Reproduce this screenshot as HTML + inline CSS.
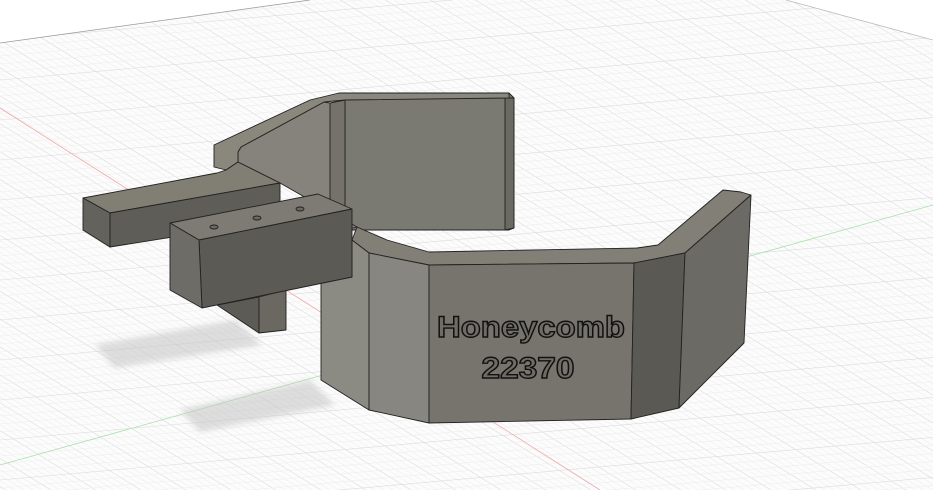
<!DOCTYPE html><html><head><meta charset="utf-8"><style>
html,body{margin:0;padding:0;background:#fff;width:933px;height:490px;overflow:hidden}
svg{display:block;overflow:hidden}
</style></head><body>
<svg id="s" width="933" height="490" viewBox="0 0 933 490" xmlns="http://www.w3.org/2000/svg">
<defs><filter id="b"><feGaussianBlur stdDeviation="3"/></filter></defs>
<polygon points="0,43 310,0 786,0 933,40 933,490 0,490" fill="#fcfcfc"/>
<g id="grid" stroke-width="0.6"></g>
<polygon points="0,0 310,0 0,43" fill="#fff"/>
<polygon points="786,0 933,0 933,40" fill="#fff"/>
<line x1="0" y1="108" x2="600" y2="490" stroke="#f0a8a8" stroke-width="0.8"/>
<line x1="0" y1="465" x2="933" y2="205" stroke="#a8e0a8" stroke-width="0.8"/>
<line x1="0" y1="43" x2="310" y2="0" stroke="#999" stroke-width="0.8"/>
<line x1="786" y1="0" x2="933" y2="40" stroke="#bbb" stroke-width="0.8"/>
<!-- shadows -->
<polygon points="95,345 235,320 262,345 115,368" fill="#c4c4c4" opacity="0.55" filter="url(#b)"/>
<polygon points="180,410 310,380 335,405 200,432" fill="#c4c4c4" opacity="0.55" filter="url(#b)"/>
<g stroke="#222" stroke-width="0.9" stroke-linejoin="round">
<!-- back panel -->
<polygon points="339,93 509,93 514,98 514,228 509,230 345,230 345,103" fill="#7b7a72"/>
<polygon points="505,98 514,98 514,228 505,230" fill="#6a6962"/>
<!-- inner shell face -->
<polygon points="238,152 241,147 324,102 330,103 345,103 345,230 357,227 280,183 238,162" fill="#85837b"/>
<polygon points="330,103 345,100 345,230 330,225" fill="#74726b"/>
<!-- shell top -->
<polygon points="214,145 310,100 339,93 509,93 509,98 345,100 324,102 241,147 238,152 238,162 226,170 214,167" fill="#8a877d"/>
<!-- arm -->
<polygon points="83,198 217,173 226,170 238,162 280,183 110,213" fill="#817e74"/>
<polygon points="83,198 110,213 110,247 83,230" fill="#64625c"/>
<polygon points="110,213 280,183 280,220 110,247" fill="#5f5d57"/>
<!-- U top band -->
<polygon points="357,227 387,240 429,252 637,248 658,245 723,190 741,192 751,195 685,253 634,263 429,265 369,253 352,240" fill="#827f76"/>
<!-- U faces -->
<polygon points="352,240 369,253 369,410 321,380 321,283 352,277" fill="#8c8b83"/>
<polygon points="369,253 429,265 429,423 369,410" fill="#878680"/>
<polygon points="429,265 634,263 631,419 429,423" fill="#76746d"/>
<polygon points="634,263 685,253 679,408 631,419" fill="#5a5954"/>
<polygon points="685,253 751,195 744,343 679,408" fill="#6b6a64"/>
<!-- leg -->
<polygon points="217,305 259,297 259,333" fill="#5c5b55"/>
<polygon points="259,297 286,290 286,330 259,333" fill="#6a6861"/>
<!-- block -->
<polygon points="170,223 318,194 352,209 199,240" fill="#7d7b73"/>
<polygon points="199,240 352,209 352,277 202,308" fill="#5b5a55"/>
<polygon points="170,223 199,240 202,308 170,290" fill="#6d6c66"/>
<ellipse cx="214" cy="227" rx="4" ry="2" fill="#6a6962"/>
<ellipse cx="257" cy="218" rx="4" ry="2" fill="#6a6962"/>
<ellipse cx="300" cy="209" rx="4" ry="2" fill="#6a6962"/>
</g>
<g font-family="Liberation Sans, sans-serif" font-weight="bold" text-anchor="middle" fill="#6e6c65" stroke="#111" stroke-width="1.4">
<text x="531" y="337" font-size="30" textLength="188" lengthAdjust="spacingAndGlyphs">Honeycomb</text>
<text x="528" y="378" font-size="30" textLength="93" lengthAdjust="spacingAndGlyphs">22370</text>
</g>
</svg>
<script>
var g=document.getElementById('grid'),h='';
for(var i=-120;i<200;i++){var o=i*9;var c=(i%5==0)?'#dcdcdc':'#eeeeee';
h+='<line x1="'+(o-400)+'" y1="'+(-0.62*400+40)+'" x2="'+(o+900)+'" y2="'+(0.62*900+40)+'" stroke="'+c+'"/>';}
for(var j=-20;j<120;j++){var y=j*8;var c2=(j%5==0)?'#dcdcdc':'#eeeeee';
h+='<line x1="0" y1="'+(y+40)+'" x2="933" y2="'+(y+40-0.26*933+160)+'" stroke="'+c2+'"/>';}
g.innerHTML=h;
</script>
</body></html>
